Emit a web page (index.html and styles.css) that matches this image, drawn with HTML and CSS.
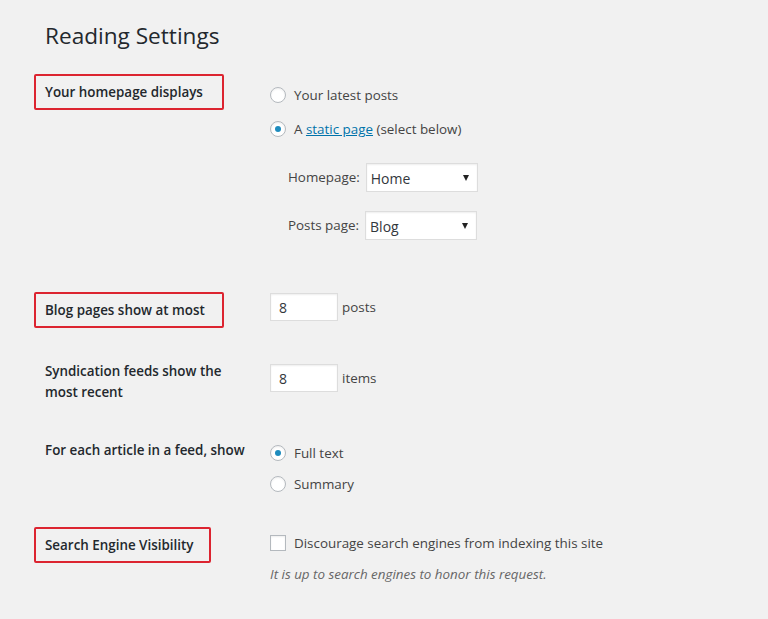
FILE: index.html
```html
<!DOCTYPE html>
<html lang="en">

<head>
    <meta charset="UTF-8">
    <meta name="viewport" content="width=device-width, initial-scale=1.0">
    <title>Reading Settings</title>
    <link rel="stylesheet" href="styles.css">
</head>

<body>
    <div class="wrap">
        <h1 class="page-title">Reading Settings</h1>

        <div class="row row-front">
            <div class="row-label"><span class="hl">Your homepage displays</span></div>
            <div class="row-field">
                <label class="choice"><input type="radio" name="show_on_front">Your latest posts</label>
                <label class="choice"><input type="radio" name="show_on_front" checked>A <a href="#">static page</a> (select below)</label>
                <div class="sub-list">
                    <div class="sub-item">
                        <span class="sub-label">Homepage:</span>
                        <span class="select select-home"><select><option>Home</option></select></span>
                    </div>
                    <div class="sub-item">
                        <span class="sub-label">Posts page:</span>
                        <span class="select"><select><option>Blog</option></select></span>
                    </div>
                </div>
            </div>
        </div>

        <div class="row row-posts">
            <div class="row-label"><span class="hl">Blog pages show at most</span></div>
            <div class="row-field inline-field">
                <input class="small-text" type="text" value="8"><span>posts</span>
            </div>
        </div>

        <div class="row row-rss">
            <div class="row-label plain">Syndication feeds show the most recent</div>
            <div class="row-field inline-field">
                <input class="small-text" type="text" value="8"><span>items</span>
            </div>
        </div>

        <div class="row row-feed">
            <div class="row-label plain nowrap">For each article in a feed, show</div>
            <div class="row-field">
                <label class="choice tight"><input type="radio" name="rss_use_excerpt" checked>Full text</label>
                <label class="choice tight"><input type="radio" name="rss_use_excerpt">Summary</label>
            </div>
        </div>

        <div class="row row-public">
            <div class="row-label"><span class="hl hl-short">Search Engine Visibility</span></div>
            <div class="row-field">
                <label class="choice"><input type="checkbox">Discourage search engines from indexing this site</label>
                <p class="description">It is up to search engines to honor this request.</p>
            </div>
        </div>
    </div>
</body>

</html>
```

FILE: styles.css
```css
body {
    margin: 0;
    padding: 0;
    background: #f1f1f1;
    color: #444;
    font-family: "Open Sans", "Noto Sans", sans-serif;
    font-size: 13.4px;
    line-height: 1.4;
}

.wrap {
    padding: 18px 0 0 45px;
    width: 723px;
    height: 601px;
    overflow: hidden;
}

.page-title {
    margin: 0;
    font-size: 22.6px;
    font-weight: 400;
    line-height: 36px;
    color: #23282d;
}

.row {
    display: flex;
    align-items: flex-start;
}

.row-label {
    width: 225px;
    flex-shrink: 0;
    font-weight: 600;
    color: #23282d;
}

.row-label.plain {
    width: 190px;
    margin-right: 35px;
    line-height: 21px;
}

.row-label.nowrap {
    white-space: nowrap;
}

.hl {
    display: inline-block;
    width: 190px;
    box-sizing: border-box;
    margin-left: -11px;
    padding: 0 0 0 9px;
    height: 36px;
    line-height: 32px;
    border: 2px solid #dc2430;
    border-radius: 2px;
}

.hl-short {
    width: 177px;
}

.row-field {
    flex: 1;
}

/* radio + checkbox */
.choice {
    display: block;
    height: 34px;
    line-height: 16px;
    padding-top: 1px;
    box-sizing: border-box;
}

.choice.tight {
    height: 31px;
}

.choice input {
    appearance: none;
    -webkit-appearance: none;
    margin: 0 8px 0 0;
    width: 16px;
    height: 16px;
    background: #fff;
    border: 1px solid #b4b9be;
    box-shadow: inset 0 1px 2px rgba(0, 0, 0, 0.07);
    position: relative;
    vertical-align: top;
}

.choice input[type="radio"] {
    border-radius: 50%;
}

.choice input[type="radio"]:checked::before {
    content: "";
    position: absolute;
    left: 4px;
    top: 4px;
    width: 6px;
    height: 6px;
    border-radius: 50%;
    background: #1e8cbe;
}

.choice a {
    color: #0073aa;
}

.sub-list {
    padding: 0 0 0 18px;
    margin-top: -1px;
}

.sub-item {
    display: flex;
    align-items: center;
    gap: 6px;
    height: 48px;
}

.select {
    position: relative;
    display: inline-block;
}

.select select {
    appearance: none;
    -webkit-appearance: none;
    width: 112px;
    height: 29px;
    padding: 2px 24px 0 4px;
    background: #fff;
    border: 1px solid #ddd;
    border-radius: 0;
    box-shadow: inset 0 1px 2px rgba(0, 0, 0, 0.07);
    font-family: inherit;
    font-size: 14px;
    color: #32373c;
}

.select::after {
    content: "";
    position: absolute;
    right: 9px;
    top: 12px;
    border-left: 3px solid transparent;
    border-right: 3px solid transparent;
    border-top: 6px solid #222;
    pointer-events: none;
}

.inline-field {
    display: flex;
    align-items: center;
    gap: 4px;
}

.small-text {
    width: 68px;
    height: 28px;
    box-sizing: border-box;
    padding: 0 8px;
    margin: 0;
    background: #fff;
    border: 1px solid #ddd;
    box-shadow: inset 0 1px 2px rgba(0, 0, 0, 0.07);
    font-family: inherit;
    font-size: 14px;
    color: #32373c;
}

.description {
    margin: -3px 0 0;
    font-style: italic;
    color: #666;
}

/* vertical rhythm, taken row by row */
.row-front {
    margin-top: 20px;
}

.row-front .row-field {
    padding-top: 12px;
}

.row-posts {
    margin-top: 43px;
}

.row-posts .row-field {
    padding-top: 1px;
}

.row-rss {
    margin-top: 36px;
}

.row-rss .row-label {
    margin-top: -3px;
}

.row-feed {
    margin-top: 37px;
}

.row-feed .row-field {
    margin-top: 4px;
}

.row-public {
    margin-top: 21px;
}

.row-public .row-field {
    padding-top: 7px;
}
```
